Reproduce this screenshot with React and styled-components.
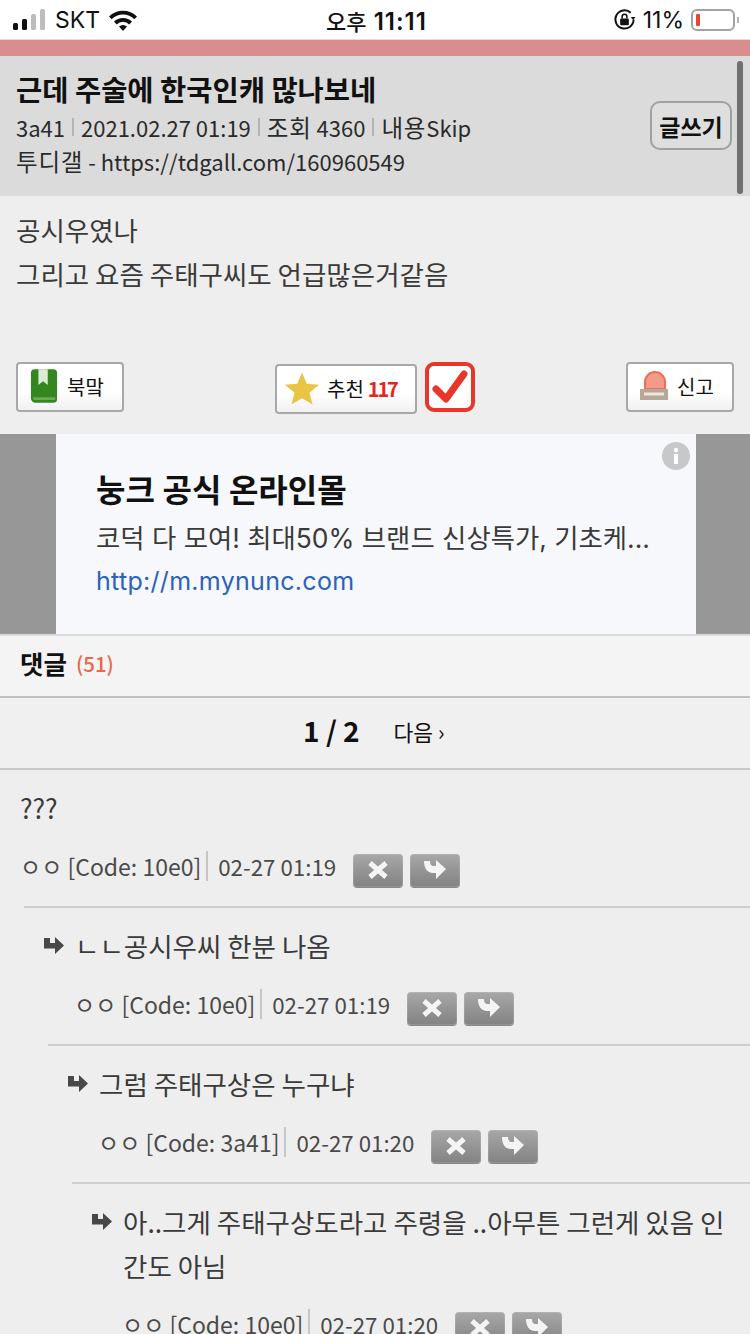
import React from "react";
import styled, { createGlobalStyle } from "styled-components";

const GlobalStyle = createGlobalStyle`
  html, body {
    margin: 0;
    padding: 0;
    background: #eeeeee;
  }
  body {
    font-family: "Noto Sans CJK KR", "Noto Sans", sans-serif;
  }
  #root {
    width: 750px;
    height: 1334px;
    overflow: hidden;
    position: relative;
  }
`;

const StatusBar = styled.div`
  height: 39px;
  background: #fff;
  border-bottom: 1px solid #dedede;
  display: grid;
  grid-template-columns: 1fr auto 1fr;
  align-items: center;
  padding: 0 10px 0 13px;
  color: #111;
  font-family: Inter, "Noto Sans CJK KR", sans-serif;
  font-size: 23px;
`;

const StatusSide = styled.div`
  display: flex;
  align-items: center;
  gap: ${(p) => p.$gap || 8}px;
  justify-content: ${(p) => (p.$right ? "flex-end" : "flex-start")};
`;

const Clock = styled.div`
  font-size: 22px;
  font-weight: 500;
`;

const ClockNum = styled.span`
  font-size: 24px;
  font-weight: 600;
  letter-spacing: 1px;
`;

const Battery = styled.div`
  width: 44px;
  height: 22px;
  box-sizing: border-box;
  border: 2px solid #a2a2a2;
  border-radius: 6px;
  padding: 3px;
  margin-right: 5px;
  position: relative;
  &::after {
    content: "";
    position: absolute;
    right: -6px;
    top: 6px;
    width: 2px;
    height: 6px;
    background: #b5b5b5;
  }
`;

const BatteryLevel = styled.div`
  width: 4px;
  height: 100%;
  background: #ee4436;
  border-radius: 1px;
`;

const PinkBar = styled.div`
  height: 16px;
  background: #d88e8e;
`;

const PostHeader = styled.header`
  height: 140px;
  box-sizing: border-box;
  background: #dbdbdb;
  padding: 14px 18px 0 16px;
  display: flex;
  justify-content: space-between;
`;

const Scrollbar = styled.div`
  position: absolute;
  top: 61px;
  right: 7px;
  width: 6px;
  height: 133px;
  border-radius: 3px;
  background: #707070;
`;

const HeaderText = styled.div`
  color: #2a2a2a;
`;

const PostTitle = styled.h1`
  margin: 0 0 2px;
  font-size: 28.5px;
  font-weight: 700;
  line-height: 38px;
  color: #111;
`;

const MetaLine = styled.div`
  font-size: 22px;
  line-height: 34px;
  display: flex;
  align-items: center;
  white-space: pre;
`;

const MetaKr = styled.span`
  font-size: 23.5px;
  letter-spacing: 0.8px;
`;

const MetaSep = styled.span`
  width: 2px;
  height: 18px;
  background: #b5b5b5;
  margin: 0 7px;
`;

const WriteButton = styled.button`
  width: 82px;
  height: 49px;
  margin-top: 31px;
  padding: 0;
  border: 2px solid #a0a0a0;
  border-radius: 10px;
  background: #dedede;
  color: #111;
  font: 700 23px "Noto Sans CJK KR", sans-serif;
`;

const PostBody = styled.section`
  height: 238px;
  box-sizing: border-box;
  background: #eeeeee;
  padding: 12px 16px 0;
`;

const BodyLine = styled.div`
  font-size: 26.5px;
  line-height: 44px;
  color: #3a3a3a;
`;

const ActionRow = styled.div`
  margin-top: 66px;
  display: flex;
  align-items: flex-start;
  justify-content: space-between;
`;

const ActionCenter = styled.div`
  display: flex;
  gap: 8px;
`;

const ActionButton = styled.div`
  width: ${(p) => p.$w}px;
  height: 50px;
  margin-top: ${(p) => p.$top || 0}px;
  box-sizing: border-box;
  border: 2px solid #a8a8a8;
  border-radius: 4px;
  background: linear-gradient(#ffffff 60%, #f1f1f1);
  display: flex;
  align-items: center;
  gap: ${(p) => p.$gap || 10}px;
  padding-left: ${(p) => p.$pad || 12}px;
  padding-bottom: 2px;
  font-size: 20px;
  color: #111;
`;

const RecCount = styled.b`
  color: #e3261d;
  font-size: 20px;
  letter-spacing: -2.2px;
  margin-left: -4px;
`;

const CheckBox = styled.div`
  width: 50px;
  height: 50px;
  box-sizing: border-box;
  border: 4px solid #e8362a;
  border-radius: 9px;
  background: #fff;
  display: flex;
  align-items: center;
  justify-content: center;
`;

const AdWrap = styled.section`
  height: 200px;
  background: #979797;
  padding: 0 54px 0 56px;
`;

const AdCard = styled.div`
  height: 100%;
  box-sizing: border-box;
  background: #f7f8fb;
  padding: 34px 40px 0;
  position: relative;
  font-family: Inter, "Noto Sans CJK KR", sans-serif;
`;

const AdInfo = styled.div`
  position: absolute;
  top: 8px;
  right: 6px;
  width: 28px;
  height: 28px;
`;

const AdTitle = styled.div`
  font-size: 32px;
  font-weight: 700;
  line-height: 46px;
  color: #111;
`;

const AdText = styled.div`
  font-size: 26.4px;
  line-height: 48px;
  color: #3a3a3a;
  white-space: nowrap;
`;

const AdLink = styled.div`
  font-size: 25px;
  line-height: 38px;
  color: #2b63b8;
  letter-spacing: 0.3px;
`;

const ReplyHead = styled.div`
  height: 60px;
  box-sizing: content-box;
  background: #f4f4f4;
  border-top: 2px solid #dcdcdc;
  border-bottom: 2px solid #c2c2c2;
  display: flex;
  align-items: center;
  padding-left: 20px;
  gap: 9px;
  font-size: 25.5px;
  font-weight: 700;
  color: #111;
`;

const ReplyLabel = styled.span`
  margin-top: -7px;
`;

const ReplyCount = styled.span`
  color: #ee664a;
  font-size: 20.5px;
  font-weight: 500;
  margin-top: -7px;
`;

const Pager = styled.div`
  height: 70px;
  background: #f0f0f0;
  border-bottom: 2px solid #c9c9c9;
  display: flex;
  align-items: center;
  padding-left: 303px;
  color: #111;
`;

const PagerNum = styled.b`
  font-size: 28px;
  margin: -6px 34px 0 0;
`;

const PagerNext = styled.span`
  font-size: 21.5px;
  margin-top: -4px;
`;

const Comment = styled.article`
  margin-left: ${(p) => p.$depth * 24}px;
  border-top: ${(p) => (p.$depth ? "2px solid #cfcfcf" : "none")};
  padding: 16px 0 0 20px;
  height: ${(p) => (p.$depth ? 138 : 136) + (p.$tall ? 44 : 0)}px;
  box-sizing: border-box;
`;

const CommentBody = styled.div`
  display: flex;
  align-items: flex-start;
  gap: 11px;
`;

const ReplyArrow = styled.svg`
  flex: none;
  margin-top: 13px;
`;

const CommentText = styled.div`
  font-size: 26.5px;
  line-height: 44px;
  color: #3a3a3a;
  white-space: nowrap;
`;

const CommentMeta = styled.div`
  display: flex;
  align-items: center;
  height: 36px;
  margin-top: 18px;
  margin-left: ${(p) => (p.$nested ? 30 : 0)}px;
  font-size: 23px;
  color: #4a4a4a;
  white-space: pre;
`;

const CommentTime = styled.span`
  font-size: 22.3px;
`;

const Divider = styled.span`
  width: 2px;
  height: 30px;
  background: #c6c6c6;
  margin: 0 10px 0 5px;
`;

const MiniButtons = styled.div`
  display: flex;
  gap: 7px;
  margin-left: 17px;
  margin-top: 8px;
`;

const MiniButton = styled.div`
  width: 50px;
  height: 33px;
  border-radius: 4px;
  background: linear-gradient(#a8a8a8, #828282);
  box-shadow: inset 0 0 0 1px rgba(255, 255, 255, 0.12), 0 1px 0 #8a8a8a;
  display: flex;
  align-items: center;
  justify-content: center;
`;

const WifiIcon = () => (
  <svg width="30" height="24" viewBox="0 0 30 24">
    <path d="M1 8.5a20 20 0 0 1 28 0l-2.6 2.8a16 16 0 0 0-22.8 0z" fill="#111" />
    <path d="M6 13.6a13 13 0 0 1 18 0l-2.7 2.8a9 9 0 0 0-12.6 0z" fill="#111" />
    <path d="M11 18.6a6 6 0 0 1 8 0L15 23z" fill="#111" />
  </svg>
);

const SignalIcon = () => (
  <svg width="34" height="22" viewBox="0 0 34 22">
    <rect x="0" y="14" width="5" height="7" rx="1.5" fill="#111" />
    <rect x="9" y="10" width="5" height="11" rx="1.5" fill="#111" />
    <rect x="18" y="5" width="5" height="16" rx="1.5" fill="#bdbdbd" />
    <rect x="27" y="0" width="5" height="21" rx="1.5" fill="#bdbdbd" />
  </svg>
);

const RotationLock = () => (
  <svg width="23" height="23" viewBox="0 0 24 24" fill="none">
    <path d="M21.5 12a9.5 9.5 0 1 1-3-7" stroke="#111" strokeWidth="2" />
    <path d="M23.5 9.5l-2.5 3-2.5-3z" fill="#111" />
    <rect x="7.5" y="11" width="9" height="7" rx="1" fill="#111" />
    <path d="M9.5 11V9a2.5 2.5 0 0 1 5 0v2" stroke="#111" strokeWidth="1.6" />
  </svg>
);

const BookIcon = () => (
  <svg width="28" height="36" viewBox="0 0 30 36">
    <path d="M5 0h20a4 4 0 0 1 4 4v28a4 4 0 0 1-4 4H6a5 5 0 0 1-5-5V4a4 4 0 0 1 4-4z" fill="#34861f" />
    <path d="M3 30h24v3H6a3 3 0 0 1-3-3z" fill="#6aa957" />
    <path d="M9 0h10v17l-5-4-5 4z" fill="#dcebd6" />
  </svg>
);

const StarIcon = () => (
  <svg width="34" height="33" viewBox="0 0 36 34">
    <path d="M18 0l5 12 13 1-10 8.5 3.2 12.5L18 27.3 6.8 34 10 21.5 0 13l13-1z" fill="#e9c543" />
  </svg>
);

const CheckIcon = () => (
  <svg width="36" height="36" viewBox="0 0 36 36">
    <path d="M4 20l10 10L32 5" fill="none" stroke="#e8362a" strokeWidth="7" strokeLinejoin="round" strokeLinecap="round" />
  </svg>
);

const SirenIcon = () => (
  <svg width="30" height="30" viewBox="0 0 30 30">
    <path d="M5 18V11a10 10 0 0 1 20 0v7z" fill="#f39a88" stroke="#ee6f58" strokeWidth="2" />
    <rect x="0" y="18" width="28" height="11" fill="#b7a796" />
    <rect x="4" y="21.5" width="20" height="3" fill="#ece6dd" />
  </svg>
);

const InfoIcon = () => (
  <svg width="28" height="28" viewBox="0 0 28 28">
    <circle cx="14" cy="14" r="14" fill="#c6c8c9" />
    <circle cx="14" cy="8" r="2.2" fill="#fff" />
    <rect x="12" y="12" width="4" height="10" fill="#fff" />
  </svg>
);

const CommentArrow = () => (
  <ReplyArrow width="20" height="18" viewBox="0 0 20 18">
    <path d="M0 1h6v5h5V0l9 8.5-9 8.5v-5.5H0z" fill="#484848" />
  </ReplyArrow>
);

const CloseGlyph = () => (
  <svg width="24" height="24" viewBox="0 0 24 24">
    <path d="M4 5l16 14M20 5L4 19" stroke="#f4f4f4" strokeWidth="5" />
  </svg>
);

const ForwardGlyph = () => (
  <svg width="24" height="22" viewBox="0 0 24 22">
    <path d="M1 2h6c0 3 1 5 4 5h2V1l10 9-10 10v-6h-3C4 14 1 9 1 2z" fill="#f4f4f4" />
  </svg>
);

const comments = [
  { depth: 0, lines: ["???"], code: "10e0", time: "02-27 01:19" },
  { depth: 1, lines: ["ㄴㄴ공시우씨 한분 나옴"], code: "10e0", time: "02-27 01:19" },
  { depth: 2, lines: ["그럼 주태구상은 누구냐"], code: "3a41", time: "02-27 01:20" },
  {
    depth: 3,
    lines: ["아..그게 주태구상도라고 주령을 ..아무튼 그런게 있음 인", "간도 아님"],
    code: "10e0",
    time: "02-27 01:20",
  },
];

export default function App() {
  return (
    <>
      <GlobalStyle />
      <StatusBar>
        <StatusSide>
          <SignalIcon />
          <span>SKT</span>
          <WifiIcon />
        </StatusSide>
        <Clock>
          오후<ClockNum> 11:11</ClockNum>
        </Clock>
        <StatusSide $right $gap={7}>
          <RotationLock />
          <span>11%</span>
          <Battery>
            <BatteryLevel />
          </Battery>
        </StatusSide>
      </StatusBar>
      <PinkBar />
      <PostHeader>
        <HeaderText>
          <PostTitle>근데 주술에 한국인캐 많나보네</PostTitle>
          <MetaLine>
            3a41<MetaSep />2021.02.27 01:19<MetaSep /><MetaKr>조회</MetaKr> 4360<MetaSep /><MetaKr>내용</MetaKr>Skip
          </MetaLine>
          <MetaLine>
            <MetaKr>투디갤</MetaKr> - https://tdgall.com/160960549
          </MetaLine>
        </HeaderText>
        <WriteButton>글쓰기</WriteButton>
      </PostHeader>
      <Scrollbar />
      <PostBody>
        <BodyLine>공시우였나</BodyLine>
        <BodyLine>그리고 요즘 주태구씨도 언급많은거같음</BodyLine>
        <ActionRow>
          <ActionButton $w={108} $gap={9}>
            <BookIcon />
            북맠
          </ActionButton>
          <ActionCenter>
            <ActionButton $w={142} $top={2} $pad={8} $gap={8}>
              <StarIcon />
              추천 <RecCount>117</RecCount>
            </ActionButton>
            <CheckBox>
              <CheckIcon />
            </CheckBox>
          </ActionCenter>
          <ActionButton $w={108} $gap={7}>
            <SirenIcon />
            신고
          </ActionButton>
        </ActionRow>
      </PostBody>
      <AdWrap>
        <AdCard>
          <AdInfo>
            <InfoIcon />
          </AdInfo>
          <AdTitle>눙크 공식 온라인몰</AdTitle>
          <AdText>코덕 다 모여! 최대50% 브랜드 신상특가, 기초케...</AdText>
          <AdLink>http://m.mynunc.com</AdLink>
        </AdCard>
      </AdWrap>
      <ReplyHead>
        <ReplyLabel>댓글</ReplyLabel>
        <ReplyCount>(51)</ReplyCount>
      </ReplyHead>
      <Pager>
        <PagerNum>1 / 2</PagerNum>
        <PagerNext>다음 ›</PagerNext>
      </Pager>
      {comments.map((c) => (
        <Comment key={c.depth} $depth={c.depth} $tall={c.lines.length > 1}>
          <CommentBody>
            {c.depth > 0 && <CommentArrow />}
            <CommentText>
              {c.lines.map((line) => (
                <div key={line}>{line}</div>
              ))}
            </CommentText>
          </CommentBody>
          <CommentMeta $nested={c.depth > 0}>
            ㅇㅇ [Code: {c.code}]
            <Divider />
            <CommentTime>{c.time}</CommentTime>
            <MiniButtons>
              <MiniButton>
                <CloseGlyph />
              </MiniButton>
              <MiniButton>
                <ForwardGlyph />
              </MiniButton>
            </MiniButtons>
          </CommentMeta>
        </Comment>
      ))}
    </>
  );
}
